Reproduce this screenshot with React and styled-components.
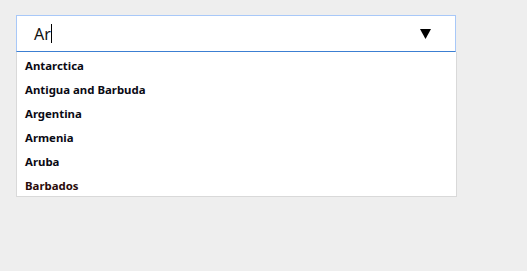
import React from "react";
import styled, { createGlobalStyle } from "styled-components";

const GlobalStyle = createGlobalStyle`
  html, body {
    margin: 0;
    padding: 0;
    background: #eeeeee;
    font-family: "Noto Sans", "Open Sans", sans-serif;
  }
`;

const Page = styled.div`
  padding: 15px 0 0 16px;
  min-height: 100vh;
  box-sizing: border-box;
`;

const Combo = styled.div`
  width: 441px;
  display: flex;
  flex-direction: column;
`;

const Field = styled.div`
  box-sizing: border-box;
  width: 440px;
  height: 37px;
  display: flex;
  align-items: center;
  justify-content: space-between;
  background: #fff;
  border: 1px solid #a8c8f8;
  border-bottom: 1px solid #3c7fd2;
  padding: 0 24px 0 17px;
`;

const Typed = styled.span`
  font-family: "Noto Sans", sans-serif;
  font-size: 16px;
  color: #111;
  display: flex;
  align-items: center;
`;

const Caret = styled.span`
  display: inline-block;
  width: 1px;
  height: 19px;
  background: #000;
`;

const Arrow = styled.svg`
  width: 11px;
  height: 10px;
  display: block;
  margin-top: 1px;
`;

const List = styled.ul`
  list-style: none;
  margin: 0;
  padding: 0;
  box-sizing: border-box;
  width: 441px;
  background: #fff;
  border: 1px solid #d9d9d9;
  border-top: none;
`;

const Item = styled.li`
  height: 24px;
  display: flex;
  align-items: center;
  padding: 2px 0 0 8px;
  box-sizing: border-box;
  font-size: 11.4px;
  font-weight: 700;
  color: ${(p) => (p.$dim ? "#2a0a0a" : "#0a0a14")};
`;

const countries = [
  "Antarctica",
  "Antigua and Barbuda",
  "Argentina",
  "Armenia",
  "Aruba",
  "Barbados",
];

export default function App() {
  return (
    <>
      <GlobalStyle />
      <Page>
        <Combo>
          <Field>
            <Typed>
              Ar
              <Caret />
            </Typed>
            <Arrow viewBox="0 0 11 10">
              <polygon points="0,0 11,0 5.5,10" fill="#000" />
            </Arrow>
          </Field>
          <List>
            {countries.map((c) => (
              <Item key={c} $dim={c === "Barbados"}>
                {c}
              </Item>
            ))}
          </List>
        </Combo>
      </Page>
    </>
  );
}
